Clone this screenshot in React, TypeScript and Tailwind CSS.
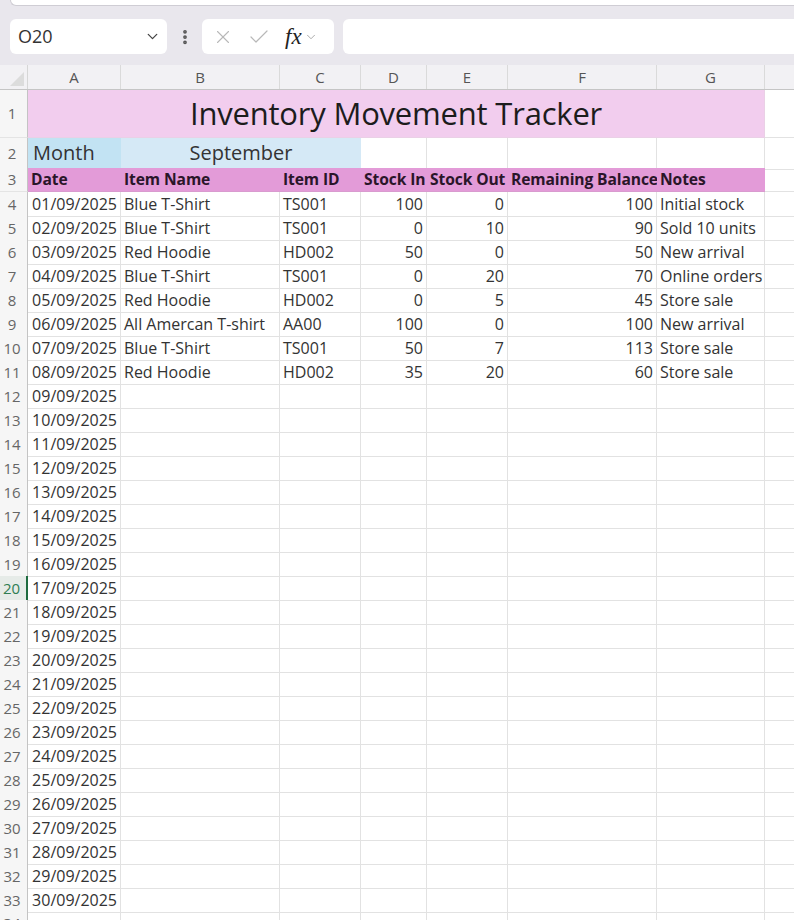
import React from "react";
import { X, Check, ChevronDown, EllipsisVertical } from "lucide-react";

const cols = "grid grid-cols-[28px_93px_159px_81px_66px_81px_149px_108px_1fr]";
const font = { fontFamily: '"Open Sans", "Noto Sans", sans-serif' };

const rows = [
  ["01/09/2025", "Blue T-Shirt", "TS001", "100", "0", "100", "Initial stock"],
  ["02/09/2025", "Blue T-Shirt", "TS001", "0", "10", "90", "Sold 10 units"],
  ["03/09/2025", "Red Hoodie", "HD002", "50", "0", "50", "New arrival"],
  ["04/09/2025", "Blue T-Shirt", "TS001", "0", "20", "70", "Online orders"],
  ["05/09/2025", "Red Hoodie", "HD002", "0", "5", "45", "Store sale"],
  ["06/09/2025", "All Amercan T-shirt", "AA00", "100", "0", "100", "New arrival"],
  ["07/09/2025", "Blue T-Shirt", "TS001", "50", "7", "113", "Store sale"],
  ["08/09/2025", "Red Hoodie", "HD002", "35", "20", "60", "Store sale"],
];

const cell =
  "h-full flex items-center px-[3px] whitespace-nowrap border-r border-b border-[#e2e2e2] text-[16px] text-[#333]";

const RowHead = ({ n, active }: { n: number; active?: boolean }) => (
  <div
    className={
      "h-full flex items-center justify-center pr-[3px] text-[15px] border-b border-[#e4e4e4] " +
      (active
        ? "bg-[#e6ebe8] text-[#2f7d52] border-r-2 border-r-[#1e6b3f]"
        : "bg-[#f6f6f6] text-[#666] border-r border-r-[#c4c4c4]")
    }
  >
    {n}
  </div>
);

const App = () => {
  const later = [];
  for (let d = 9; d <= 31; d++) later.push(d);

  return (
    <div className="w-[794px] h-[920px] overflow-hidden bg-[#e9e7ed]" style={font}>
      {/* ribbon edge */}
      <div className="ml-[10px] h-[6px] bg-white rounded-bl-lg border-b border-l border-[#cfcdd4]" />

      {/* formula bar */}
      <div className="flex items-center mt-[13px] h-[35px]">
        <div className="ml-[10px] w-[157px] h-full bg-white rounded-md flex items-center justify-between pl-[8px] pr-[6px]">
          <span className="text-[18px] text-[#333]">O20</span>
          <ChevronDown size={17} strokeWidth={1.8} className="text-[#444]" />
        </div>
        <div className="w-[35px] flex justify-center">
          <EllipsisVertical size={18} strokeWidth={3} className="text-[#555]" />
        </div>
        <div className="w-[132px] h-full bg-white rounded-md flex items-center pl-[10px] pr-[4px]">
          <X size={22} strokeWidth={1.2} className="text-[#b8b8b8]" />
          <Check size={24} strokeWidth={1.2} className="text-[#b8b8b8] ml-[13px]" />
          <span
            className="ml-[14px] text-[23px] italic text-[#222] leading-none"
            style={{ fontFamily: '"Liberation Serif", serif' }}
          >
            fx
          </span>
          <ChevronDown size={14} strokeWidth={1.4} className="text-[#999] ml-[2px]" />
        </div>
        <div className="ml-[9px] flex-1 h-full bg-white rounded-l-md" />
      </div>

      {/* column headers */}
      <div className={cols + " h-[25px] mt-[11px] bg-[#f2f1f4] border-b border-[#c5c5c5]"}>
        <div className="relative border-r border-[#d6d6d6]">
          <div className="absolute right-[3px] bottom-[3px] w-0 h-0 border-l-[14px] border-l-transparent border-b-[14px] border-b-[#dcdcdc]" />
        </div>
        {["A", "B", "C", "D", "E", "F", "G", "H"].map((c) => (
          <div
            key={c}
            className={
              "flex items-center justify-center text-[15px] text-[#555] " +
              (c !== "H" ? "border-r border-[#dadada]" : "")
            }
          >
            {c !== "H" ? c : ""}
          </div>
        ))}
      </div>

      <div className="bg-white">
        {/* row 1 title */}
        <div className={cols + " h-[48px]"}>
          <RowHead n={1} />
          <div className="col-span-7 h-full flex items-center justify-center bg-[#f2cdee] border-r border-b border-[#ead0e6]">
            <span className="text-[31px] text-[#1c1c1c] tracking-[-0.2px]">Inventory Movement Tracker</span>
          </div>
          <div className="h-full border-b border-[#e2e2e2]" />
        </div>

        {/* row 2 month */}
        <div className={cols + " h-[30px]"}>
          <RowHead n={2} />
          <div className="h-full flex items-end pb-[2px] pl-[5px] bg-[#c2e3f3] text-[20px] text-[#333]">Month</div>
          <div className="col-span-2 h-full flex items-end pb-[2px] justify-center bg-[#d5e9f6] text-[20px] text-[#333]">
            September
          </div>
          <div className={cell} />
          <div className={cell} />
          <div className={cell} />
          <div className={cell} />
          <div className="h-full border-b border-[#e2e2e2]" />
        </div>

        {/* row 3 headers */}
        <div className={cols + " h-[24px]"}>
          <RowHead n={3} />
          {["Date", "Item Name", "Item ID", "Stock In", "Stock Out", "Remaining Balance", "Notes"].map((h) => (
            <div
              key={h}
              className="h-full flex items-center px-[3px] bg-[#e39bd8] text-[15.6px] font-bold tracking-[-0.1px] text-[#2a1529] whitespace-nowrap overflow-hidden border-b border-[#d99bcf]"
            >
              {h}
            </div>
          ))}
          <div className="h-full border-b border-[#e2e2e2]" />
        </div>

        {/* data rows */}
        {rows.map((r, i) => (
          <div key={i} className={cols + " h-[24px]"}>
            <RowHead n={i + 4} />
            <div className={cell + " justify-end"}>{r[0]}</div>
            <div className={cell}>{r[1]}</div>
            <div className={cell}>{r[2]}</div>
            <div className={cell + " justify-end"}>{r[3]}</div>
            <div className={cell + " justify-end"}>{r[4]}</div>
            <div className={cell + " justify-end"}>{r[5]}</div>
            <div className={cell + " relative z-10"}>{r[6]}</div>
            <div className="h-full border-b border-[#e2e2e2]" />
          </div>
        ))}

        {later.map((d) => {
          const n = d + 3;
          const date = d <= 30 ? String(d).padStart(2, "0") + "/09/2025" : "";
          return (
            <div key={d} className={cols + " h-[24px]"}>
              <RowHead n={n} active={n === 20} />
              <div className={cell + " justify-end"}>{date}</div>
              <div className={cell} />
              <div className={cell} />
              <div className={cell} />
              <div className={cell} />
              <div className={cell} />
              <div className={cell} />
              <div className="h-full border-b border-[#e2e2e2]" />
            </div>
          );
        })}
      </div>
    </div>
  );
};

export default App;
